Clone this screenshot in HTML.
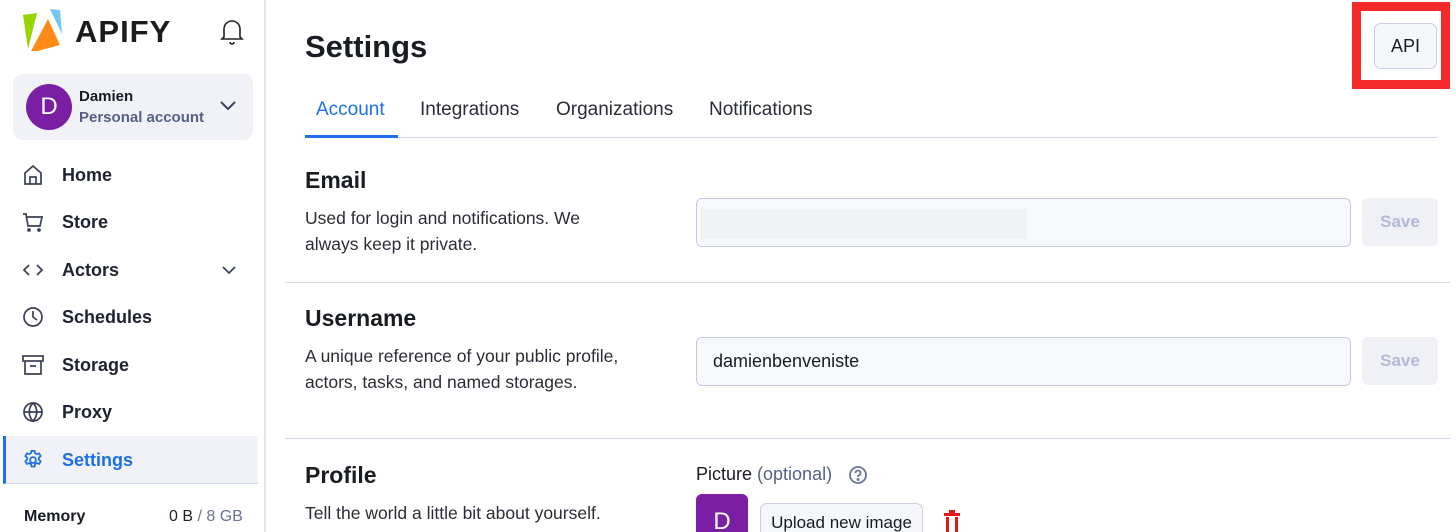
<!DOCTYPE html>
<html><head><meta charset="utf-8"><style>
*{box-sizing:border-box;margin:0;padding:0}
html,body{width:1456px;height:532px;overflow:hidden}
body{background:#fff;font-family:"Liberation Sans",sans-serif;color:#1a1c24;position:relative}
.a{position:absolute}
.nav{position:absolute;left:62px;font-size:18px;font-weight:bold;color:#1f2230}
.ic{position:absolute;left:22px;width:22px;height:22px}
.t{font-size:17.5px;color:#2a2d38;line-height:26px}
.h{font-size:23px;font-weight:bold;color:#1a1c24}
.inp{position:absolute;left:696px;width:655px;height:49px;border:1px solid #c3c8e6;border-radius:6px;background:#f8f9fc}
.save{position:absolute;left:1362px;width:76px;height:48px;border-radius:6px;background:#eff1f7;color:#b4bad6;font-size:17px;font-weight:bold;text-align:center;line-height:48px}
.tab{position:absolute;top:99px;font-size:19px;color:#2a2d38}
</style></head><body>
<div class="a" style="left:264px;top:0;width:2px;height:532px;background:#dfe2ef"></div>
<svg class="a" style="left:22px;top:9px" width="42" height="42" viewBox="0 0 42 42">
<polygon points="1,6 15,4 6,40 " fill="#97d400"/>
<polygon points="28,0 38,1 40,25 " fill="#73c6ee"/>
<polygon points="26,10 38,36 8,44" fill="#ff8a18"/>
</svg>
<div class="a" style="left:75px;top:14px;font-size:31px;font-weight:bold;color:#1a1c1e;letter-spacing:1px">APIFY</div>
<svg class="a" style="left:219px;top:17px" width="26" height="28" viewBox="0 0 26 28" fill="none" stroke="#222" stroke-width="1.6"><path d="M5 20 V12 a8 8 0 0 1 16 0 V20 L23 22 H3 Z"/><path d="M11 25 a2 2 0 0 0 4 0"/></svg>
<div class="a" style="left:13px;top:74px;width:240px;height:66px;background:#f0f2f8;border-radius:10px"></div>
<div class="a" style="left:26px;top:84px;width:46px;height:46px;border-radius:50%;background:#7a1fa4;color:#fff;font-size:24px;text-align:center;line-height:46px">D</div>
<div class="a" style="left:79px;top:88px;font-size:15px;font-weight:bold">Damien</div>
<div class="a" style="left:79px;top:109px;font-size:15px;font-weight:bold;color:#566083">Personal account</div>
<svg class="a" style="left:219px;top:100px" width="18" height="12" viewBox="0 0 18 12" fill="none" stroke="#3d4460" stroke-width="2"><path d="M2 2 L9 9 L16 2"/></svg>

<svg class="ic" style="top:164px" viewBox="0 0 22 22" fill="none" stroke="#3b4054" stroke-width="1.7"><path d="M3 9 L11 2 L19 9 V20 H3 Z"/><path d="M8 20 V13 H14 V20"/></svg>
<div class="nav" style="top:165px">Home</div>
<svg class="ic" style="top:211px" viewBox="0 0 22 22" fill="none" stroke="#3b4054" stroke-width="1.7"><path d="M1 3 H4 L6 15 H18 L20 6 H5"/><circle cx="7" cy="19" r="1" fill="#3b4054"/><circle cx="17" cy="19" r="1" fill="#3b4054"/></svg>
<div class="nav" style="top:212px">Store</div>
<svg class="ic" style="top:259px" viewBox="0 0 22 22" fill="none" stroke="#3b4054" stroke-width="1.7"><path d="M7 6 L2 11 L7 16 M15 6 L20 11 L15 16"/></svg>
<div class="nav" style="top:260px">Actors</div>
<svg class="a" style="left:221px;top:265px" width="16" height="10" viewBox="0 0 16 10" fill="none" stroke="#3d4460" stroke-width="1.8"><path d="M2 2 L8 8 L14 2"/></svg>
<svg class="ic" style="top:306px" viewBox="0 0 22 22" fill="none" stroke="#3b4054" stroke-width="1.7"><circle cx="11" cy="11" r="9"/><path d="M11 5 V11 L15 14"/></svg>
<div class="nav" style="top:307px">Schedules</div>
<svg class="ic" style="top:354px" viewBox="0 0 22 22" fill="none" stroke="#3b4054" stroke-width="1.7"><rect x="1" y="2" width="20" height="5"/><path d="M3 7 V20 H19 V7 M8 12 H14"/></svg>
<div class="nav" style="top:355px">Storage</div>
<svg class="ic" style="top:401px" viewBox="0 0 22 22" fill="none" stroke="#3b4054" stroke-width="1.7"><circle cx="11" cy="11" r="9"/><path d="M2 11 H20 M11 2 C6 7 6 15 11 20 C16 15 16 7 11 2"/></svg>
<div class="nav" style="top:402px">Proxy</div>
<div class="a" style="left:3px;top:436px;width:255px;height:48px;background:#f0f2f8;border-left:3px solid #1f6fea;border-bottom:1px solid #d0d6ee"></div>
<svg class="ic" style="top:449px" viewBox="0 0 24 24" fill="none" stroke="#1f6fea" stroke-width="1.9"><path d="M10.3 2h3.4l.5 2.6 2 1.1 2.5-.9 1.7 2.9-2 1.7v2.3l2 1.7-1.7 2.9-2.5-.9-2 1.2-.5 2.5h-3.4l-.5-2.5-2-1.2-2.5.9-1.7-2.9 2-1.7V9.4l-2-1.7 1.7-2.9 2.5.9 2-1.1z"/><circle cx="12" cy="12" r="3.2"/></svg>
<div class="nav" style="top:450px;color:#1f6fea">Settings</div>
<div class="a" style="left:24px;top:508px;font-size:16px;font-weight:bold">Memory</div>
<div class="a" style="left:169px;top:508px;font-size:16px;color:#1f2230">0 B <span style="color:#6a7191">/ 8 GB</span></div>

<div class="a" style="left:305px;top:29px;font-size:31px;font-weight:bold">Settings</div>
<div class="a" style="left:1352px;top:2px;width:98px;height:87px;border:9px solid #f42a2a"></div>
<div class="a" style="left:1374px;top:23px;width:63px;height:46px;border:1px solid #c7cde6;border-radius:7px;background:#f6f7fb;font-size:18px;text-align:center;line-height:44px">API</div>
<div class="a" style="left:305px;top:137px;width:1132px;height:1px;background:#d3d8ee"></div>
<div class="a" style="left:305px;top:135px;width:93px;height:3px;background:#1f6fea"></div>
<div class="tab" style="left:316px;color:#1f6fea">Account</div>
<div class="tab" style="left:420px">Integrations</div>
<div class="tab" style="left:556px">Organizations</div>
<div class="tab" style="left:709px">Notifications</div>

<div class="a h" style="left:305px;top:167px">Email</div>
<div class="a t" style="left:305px;top:205px">Used for login and notifications. We<br>always keep it private.</div>
<div class="inp" style="top:198px"><div class="a" style="left:3px;top:10px;width:327px;height:30px;background:#f1f2f4"></div></div>
<div class="save" style="top:198px">Save</div>
<div class="a" style="left:285px;top:282px;width:1165px;height:1px;background:#d3d8ee"></div>

<div class="a h" style="left:305px;top:305px">Username</div>
<div class="a t" style="left:305px;top:343px">A unique reference of your public profile,<br>actors, tasks, and named storages.</div>
<div class="inp" style="top:337px"><div class="a" style="left:16px;top:13px;font-size:18px;color:#1a1c24">damienbenveniste</div></div>
<div class="save" style="top:337px">Save</div>
<div class="a" style="left:285px;top:438px;width:1165px;height:1px;background:#d3d8ee"></div>

<div class="a h" style="left:305px;top:462px">Profile</div>
<div class="a t" style="left:305px;top:500px">Tell the world a little bit about yourself.</div>
<div class="a" style="left:696px;top:464px;font-size:18px;color:#1a1c24">Picture <span style="color:#566083">(optional)</span></div>
<svg class="a" style="left:848px;top:465px" width="20" height="20" viewBox="0 0 20 20" fill="none" stroke="#6b7396" stroke-width="1.8"><circle cx="10" cy="10" r="8"/><path d="M7.5 8 a2.5 2.5 0 1 1 3.5 2.3 c-.8.4-1 .9-1 1.7"/><circle cx="10" cy="14.5" r=".6" fill="#6b7396"/></svg>
<div class="a" style="left:696px;top:494px;width:52px;height:52px;border-radius:6px;background:#7a1fa4;color:#fff;font-size:24px;text-align:center;line-height:56px">D</div>
<div class="a" style="left:760px;top:503px;width:163px;height:44px;border:1px solid #c7cde6;border-radius:7px;background:#f6f7fb;font-size:17px;text-align:center;padding-top:9px">Upload new image</div>
<svg class="a" style="left:943px;top:510px" width="18" height="22" viewBox="0 0 18 22" fill="#e11919"><rect x="1" y="3" width="16" height="3"/><rect x="6" y="0" width="6" height="3"/><rect x="3" y="7" width="3" height="15"/><rect x="12" y="7" width="3" height="15"/></svg>
</body></html>
